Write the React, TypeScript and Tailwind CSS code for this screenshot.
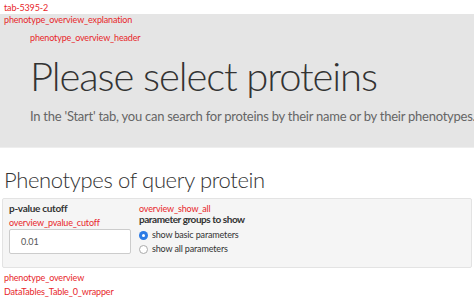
export default function App() {
  return (
    <div className="w-[474px] h-[299px] overflow-hidden bg-white font-['Lato',sans-serif] text-[#333]">
      <div className="h-[14px] pl-[4px] pt-[2px] text-[9px] tracking-[-0.15px] leading-[12px] text-[#e8262a]">tab-5395-2</div>

      {/* jumbotron */}
      <div className="h-[134px] bg-[#e5e5e5] border-b border-[#eeeeee]">
        <div className="pl-[4px] text-[9px] tracking-[-0.15px] leading-[12px] text-[#e8262a]">phenotype_overview_explanation</div>
        <div className="pl-[30px]">
          <div className="mt-[6px] text-[9px] tracking-[-0.15px] leading-[12px] text-[#e8262a]">phenotype_overview_header</div>
          <h1 className="mt-[12px] text-[40px] tracking-[-1.1px] leading-none font-light text-[#333]">Please select proteins</h1>
          <p className="mt-[10px] text-[13px] tracking-[-0.25px] leading-[20px] text-[#666] whitespace-nowrap">
            In the 'Start' tab, you can search for proteins by their name or by their phenotypes.
          </p>
        </div>
      </div>

      <h2 className="mt-[18px] pl-[4px] text-[22px] tracking-[-0.35px] leading-[28px] font-light">Phenotypes of query protein</h2>

      {/* controls */}
      <div className="mx-[2px] mt-[4px] h-[70px] flex bg-[#f5f5f5] border border-[#e3e3e3] rounded-[2px]">
        <div className="w-[136px] pl-[6px] pt-[3px]">
          <div className="text-[10px] tracking-[-0.3px] leading-[12px] font-bold">p-value cutoff</div>
          <div className="mt-[3px] text-[9px] tracking-[-0.15px] leading-[12px] text-[#e8262a]">overview_pvalue_cutoff</div>
          <div className="w-[122px] h-[25px] bg-white border border-[#cccccc] rounded-[2px] flex items-center pl-[11px] text-[9px] text-[#555]">
            0.01
          </div>
        </div>
        <div className="pt-[4px]">
          <div className="text-[9px] tracking-[-0.15px] leading-[11px] text-[#e8262a]">overview_show_all</div>
          <div className="text-[10px] tracking-[-0.45px] leading-[11px] font-bold">parameter groups to show</div>
          <div className="mt-[3px] flex items-center h-[14px] gap-[4px] text-[9px] tracking-[-0.15px]">
            <span className="w-[9px] h-[9px] rounded-full bg-[#2c7be5] flex items-center justify-center">
              <span className="w-[3px] h-[3px] rounded-full bg-white" />
            </span>
            show basic parameters
          </div>
          <div className="flex items-center h-[14px] gap-[4px] text-[9px] tracking-[-0.15px]">
            <span className="w-[9px] h-[9px] rounded-full border border-[#aaa] bg-white" />
            show all parameters
          </div>
        </div>
      </div>

      <div className="mt-[3px] pl-[4px] text-[9px] tracking-[-0.15px] leading-[14px] text-[#e8262a]">phenotype_overview</div>
      <div className="pl-[4px] text-[9px] tracking-[-0.15px] leading-[14px] text-[#e8262a]">DataTables_Table_0_wrapper</div>
    </div>
  );
}
